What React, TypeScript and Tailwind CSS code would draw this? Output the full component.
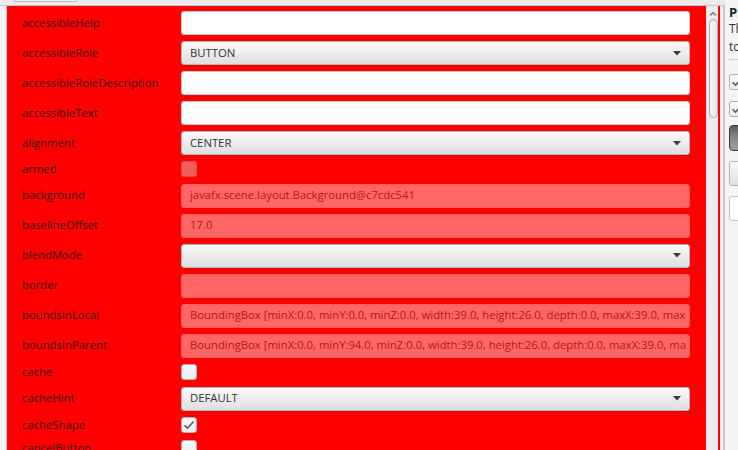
import React from "react";

type Row = {
  label: string;
  type: "text" | "combo" | "check";
  value?: string;
  disabled?: boolean;
  checked?: boolean;
};

const rows: Row[] = [
  { label: "accessibleHelp", type: "text", value: "" },
  { label: "accessibleRole", type: "combo", value: "BUTTON" },
  { label: "accessibleRoleDescription", type: "text", value: "" },
  { label: "accessibleText", type: "text", value: "" },
  { label: "alignment", type: "combo", value: "CENTER" },
  { label: "armed", type: "check", disabled: true },
  { label: "background", type: "text", disabled: true, value: "javafx.scene.layout.Background@c7cdc541" },
  { label: "baselineOffset", type: "text", disabled: true, value: "17.0" },
  { label: "blendMode", type: "combo", value: "" },
  { label: "border", type: "text", disabled: true, value: "" },
  {
    label: "boundsInLocal",
    type: "text",
    disabled: true,
    value: "BoundingBox [minX:0.0, minY:0.0, minZ:0.0, width:39.0, height:26.0, depth:0.0, maxX:39.0, maxY:26.0, maxZ:0.0]",
  },
  {
    label: "boundsInParent",
    type: "text",
    disabled: true,
    value: "BoundingBox [minX:0.0, minY:94.0, minZ:0.0, width:39.0, height:26.0, depth:0.0, maxX:39.0, maxY:120.0, maxZ:0.0]",
  },
  { label: "cache", type: "check" },
  { label: "cacheHint", type: "combo", value: "DEFAULT" },
  { label: "cacheShape", type: "check", checked: true },
  { label: "cancelButton", type: "check" },
];

function Check() {
  return (
    <svg width="12" height="10" viewBox="0 0 12 10" className="block">
      <path d="M1.5 5.2 L4.5 8.2 L10.5 1.5" fill="none" stroke="#555555" strokeWidth="1.5" />
    </svg>
  );
}

function Field({ row }: { row: Row }) {
  if (row.type === "check") {
    if (row.disabled) {
      return (
        <div className="h-[16px] flex items-center">
          <div className="w-[16px] h-[16px] rounded-[3px] border border-[#e04a4a] bg-[#f25c5c]" />
        </div>
      );
    }
    return (
      <div className="h-[16px] flex items-center">
        <div className="w-[16px] h-[16px] rounded-[3px] border border-[#b0b0b0] bg-gradient-to-b from-[#fbfbfb] to-[#ececec] flex items-center justify-center">
          {row.checked ? <Check /> : null}
        </div>
      </div>
    );
  }
  if (row.type === "combo") {
    return (
      <div className="h-[24px] flex-1 rounded-[3px] border border-[#b4b4b4] bg-gradient-to-b from-[#fafafa] via-[#ececec] to-[#dedede] flex items-center pl-[8px] pr-[6px] text-[#333333] shadow-[0_1px_0_rgba(0,0,0,0.12)]">
        <span className="flex-1 whitespace-nowrap overflow-hidden">{row.value}</span>
        <svg width="8" height="5" viewBox="0 0 8 5" className="block mr-[2px]">
          <path d="M0 0 L8 0 L4 4.5 Z" fill="#3c3c3c" />
        </svg>
      </div>
    );
  }
  if (row.disabled) {
    return (
      <div className="h-[24px] flex-1 min-w-0 rounded-[3px] border border-[#ff5c5c] bg-[#ff6666] flex items-center pl-[8px] pr-[3px] text-[#b01818] overflow-hidden">
        <span className="whitespace-nowrap overflow-hidden">{row.value}</span>
      </div>
    );
  }
  return (
    <div className="h-[24px] flex-1 rounded-[3px] border border-[#c8c8c8] bg-white flex items-center pl-[8px] text-[#333333]">
      {row.value}
    </div>
  );
}

export default function App() {
  return (
    <div
      className="w-[738px] h-[450px] overflow-hidden flex bg-[#f4f4f4] text-[11.3px]"
      style={{ fontFamily: '"Open Sans", "Noto Sans", sans-serif' }}
    >
      {/* main column */}
      <div className="w-[725px] h-full flex flex-col shrink-0">
        {/* tab strip */}
        <div className="h-[6px] shrink-0 bg-[#ececec] border-b border-[#c6c6c6] relative">
          <div className="absolute left-[14px] top-0 w-[63px] h-[2px] bg-[#f7f7f7] border-x border-b border-[#bdbdbd]" />
        </div>
        <div className="flex-1 flex min-h-0">
          <div className="w-[7px] shrink-0 bg-[#f4f4f4] border-r border-[#c6c6c6]" />
          {/* red scroll pane */}
          <div className="w-[713px] shrink-0 bg-[#ff0000] flex pr-[2px]">
            <div className="flex-1 min-w-0 pl-[15px] pr-[16px] pt-[5px] flex flex-col gap-[6px]">
              {rows.map((r) => (
                <div key={r.label} className="flex items-center">
                  <div className="w-[159px] shrink-0 text-[#3a1616] whitespace-nowrap">{r.label}</div>
                  <Field row={r} />
                </div>
              ))}
            </div>
            {/* scrollbar */}
            <div className="w-[12px] shrink-0 bg-[#ececec] border-l border-[#e0e0e0] flex flex-col items-center">
              <svg width="8" height="6" viewBox="0 0 8 6" className="block mt-[5px]">
                <path d="M1 4.5 L4 1.5 L7 4.5" fill="none" stroke="#6a6a6a" strokeWidth="1.1" />
              </svg>
              <div className="mt-[2px] ml-[1px] w-[9px] h-[99px] rounded-[5px] border border-[#a8a8a8] bg-gradient-to-r from-[#f6f6f6] to-[#e6e6e6]" />
            </div>
          </div>
          <div className="w-[3px] shrink-0 bg-[#ececec]" />
          <div className="w-[2px] shrink-0 bg-[#c9c9c9]" />
        </div>
      </div>
      {/* right panel */}
      <div className="flex-1 min-w-0 overflow-hidden pl-[4px] flex flex-col">
        <div className="pt-[4px] text-[13px] font-bold text-[#222] whitespace-nowrap leading-[16px]">Properties</div>
        <div className="text-[12px] text-[#333] whitespace-nowrap leading-[18px]">The selected node</div>
        <div className="text-[12px] text-[#333] whitespace-nowrap leading-[18px]">to inspect</div>
        <div className="mt-[3px] h-[1px] w-[20px] bg-[#cfcfcf]" />
        <div className="mt-[14px] w-[16px] h-[16px] rounded-[3px] border border-[#b0b0b0] bg-gradient-to-b from-[#fbfbfb] to-[#ececec] flex items-center justify-center">
          <Check />
        </div>
        <div className="mt-[11px] w-[16px] h-[16px] rounded-[3px] border border-[#b0b0b0] bg-gradient-to-b from-[#fbfbfb] to-[#ececec] flex items-center justify-center">
          <Check />
        </div>
        <div className="mt-[8px] w-[30px] h-[26px] rounded-[4px] border border-[#3a3a3a] bg-gradient-to-b from-[#5a5a5a] via-[#8a8a8a] to-[#9c9c9c]" />
        <div className="mt-[10px] w-[30px] h-[25px] rounded-[3px] border border-[#b4b4b4] bg-gradient-to-b from-[#fafafa] to-[#e0e0e0]" />
        <div className="mt-[10px] w-[30px] h-[25px] rounded-[3px] border border-[#c4c4c4] bg-white" />
      </div>
    </div>
  );
}
